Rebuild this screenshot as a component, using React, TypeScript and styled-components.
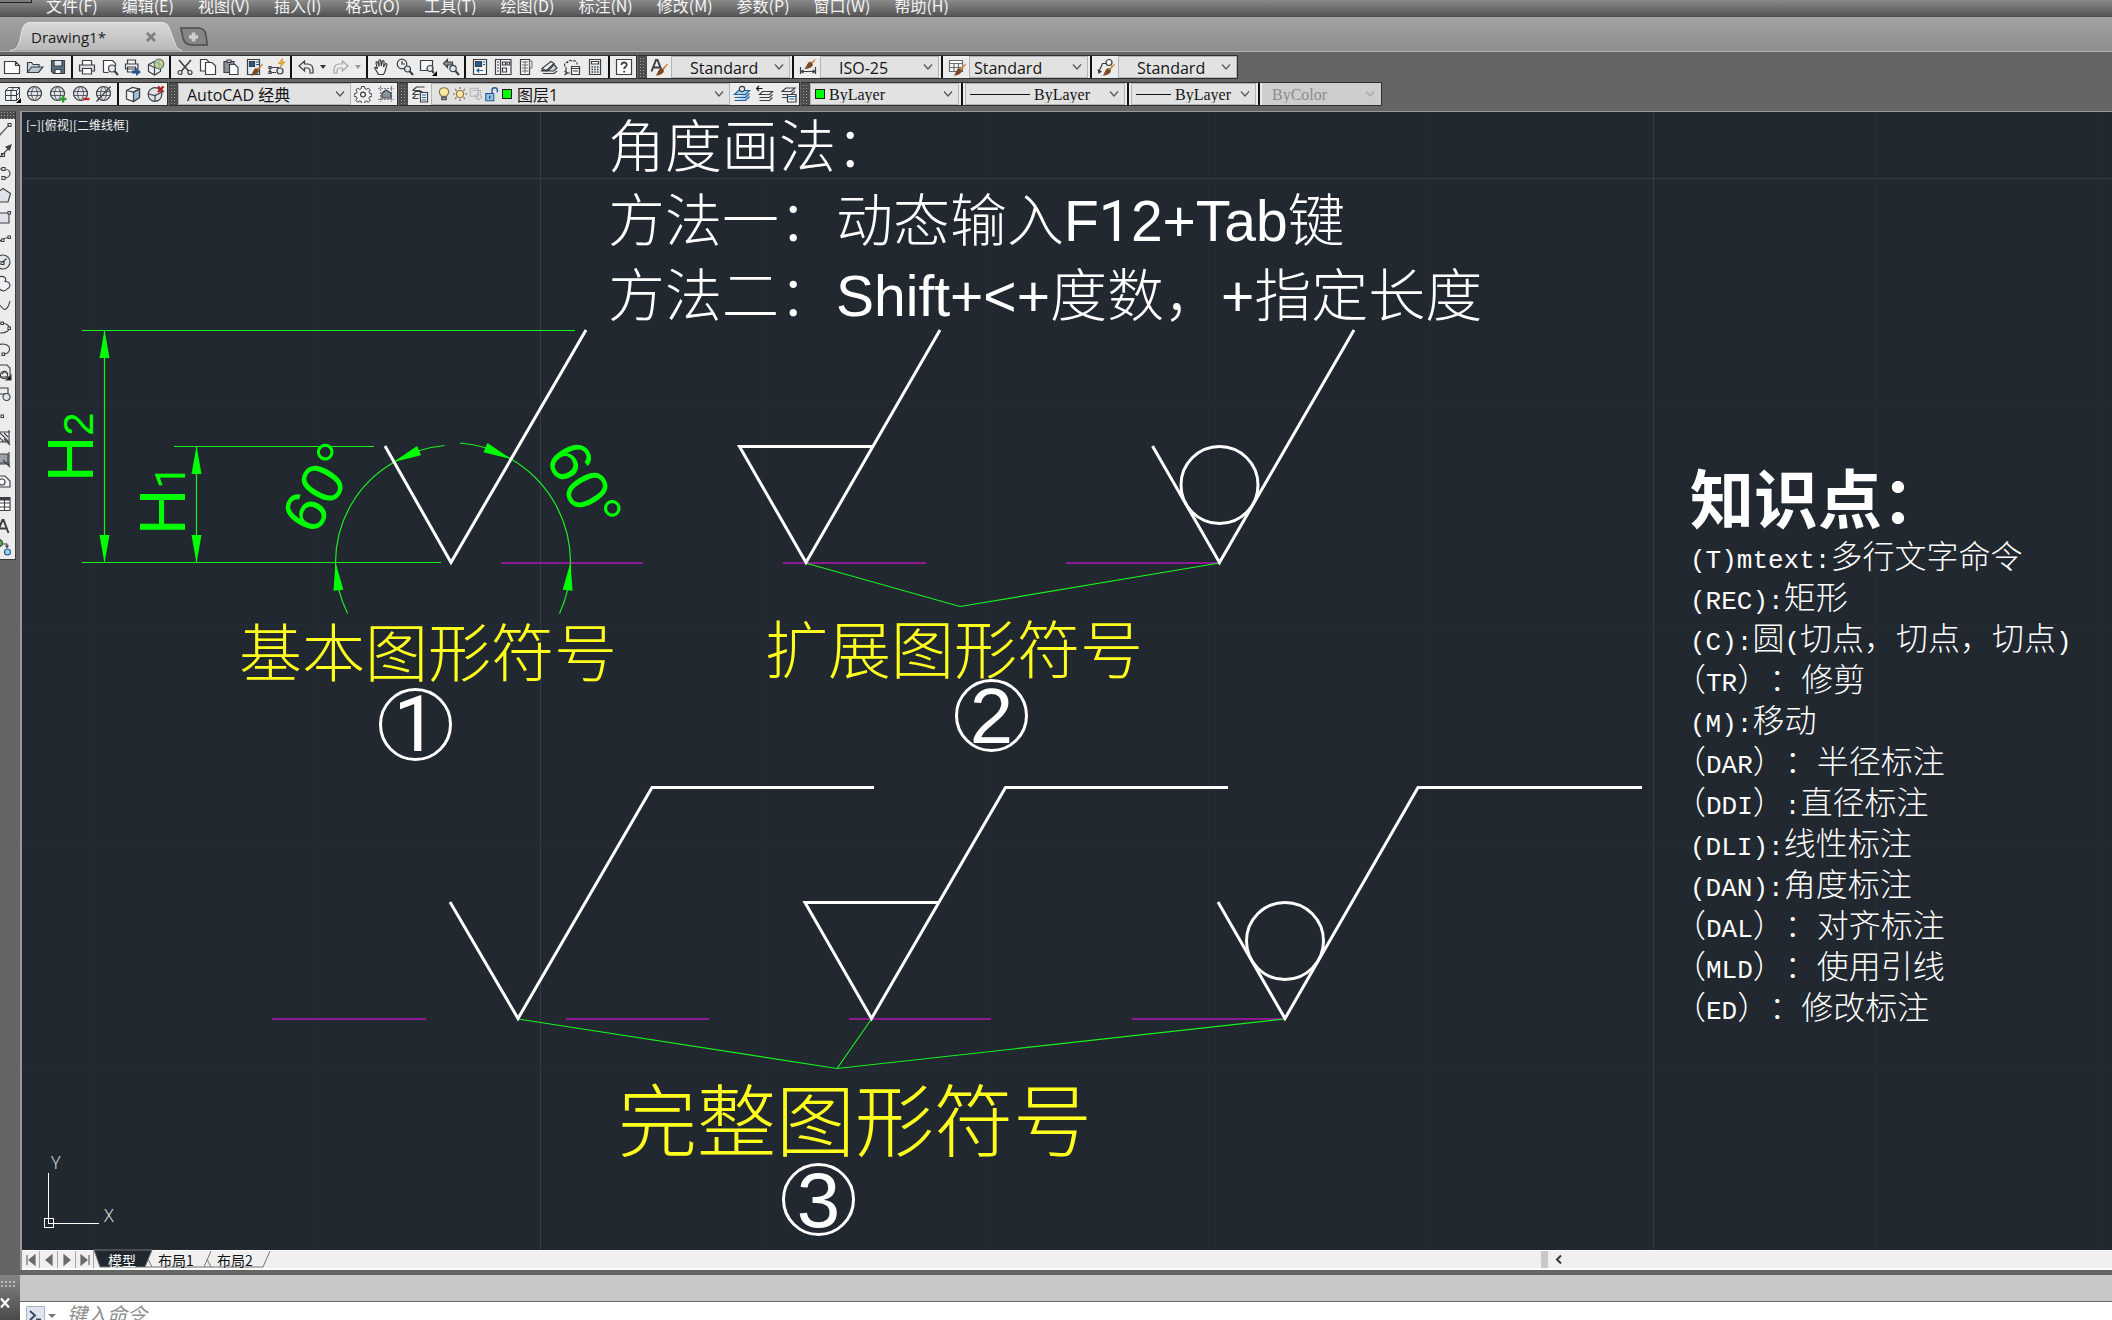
import React from "react";
import styled, { createGlobalStyle, css } from "styled-components";

const UI_FONT = '"Open Sans", "Noto Sans CJK SC", sans-serif';
const CJK_FONT = '"Noto Sans CJK SC", sans-serif';
const MONO_FONT = '"Liberation Mono", "Noto Sans CJK SC", monospace';
const SERIF_FONT = '"Liberation Serif", "Noto Sans CJK SC", serif';
const DRAW_FONT = '"Liberation Sans", "Noto Sans CJK SC", sans-serif';
const DIGIT_FONT = 'Roboto, "Liberation Sans", sans-serif';

const INK = "#3b3f44";
const BLUE = "#1d5c94";
const BROWN = "#7a4a26";
const GREEN = "#00ff00";
const DIM = "#19f01e";

const Global = createGlobalStyle`
  * { box-sizing: border-box; }
  body { margin: 0; background: #656565; font-family: ${UI_FONT}; }
  button, select, input { margin: 0; padding: 0; border: 0; background: none; font: inherit; color: inherit; border-radius: 0; }
`;

/* ---------- application frame ---------- */

const Frame = styled.div`
  display: flex;
  flex-direction: column;
  height: 100vh;
  overflow: hidden;
  background: #656565;
`;

const MenuBar = styled.nav`
  display: flex;
  flex: none;
  align-items: flex-start;
  gap: 24px;
  height: 17px;
  overflow: hidden;
  background: linear-gradient(#8a8a8a, #555555);
  border-bottom: 1px solid #4c4c4c;
`;

const AppButton = styled.button`
  width: 32px;
  height: 3px;
  margin-right: -10px;
  background: #7c7c7c;
  border: solid #222;
  border-width: 0 1px 1px 0;
`;

const MenuItem = styled.button`
  font-family: ${CJK_FONT};
  font-size: 16px;
  line-height: 10px;
  white-space: nowrap;
  color: #f4f4f4;
`;

const FileTabs = styled.div`
  display: flex;
  flex: none;
  align-items: flex-end;
  height: 35px;
  background: linear-gradient(#a2a2a2, #8e8e8e);
  border-bottom: 1px solid #b2b2b2;
`;

const FileTab = styled.div`
  position: relative;
  display: flex;
  align-items: center;
  justify-content: space-between;
  width: 172px;
  height: 29px;
  margin-left: 10px;
  padding: 0 26px 0 21px;
`;

const TabShape = styled.svg`
  position: absolute;
  inset: 0;
  width: 100%;
  height: 100%;
`;

const TabLabel = styled.button`
  position: relative;
  font-size: 15px;
  line-height: 24px;
  color: #1c1c1c;
`;

const TabIconButton = styled.button`
  position: relative;
  display: flex;
`;

const NewTab = styled(TabIconButton)`
  margin: 0 0 5px -2px;
`;

/* ---------- toolbars ---------- */

const ToolRows = styled.div`
  display: flex;
  flex: none;
  flex-direction: column;
  gap: 3px;
  padding: 3px 0 5px;
  background: #656565;
`;

const ToolRow = styled.div`
  display: flex;
  gap: 1px;
`;

const Bar = styled.div`
  display: flex;
  height: 24px;
  background: #ececec;
  border: solid #2f2f2f;
  border-width: 1px 1px 1px 0;
`;

const Grip = styled.span`
  width: 9px;
  background-color: #4c4c4c;
  background-image: radial-gradient(#a0a0a0 30%, transparent 34%);
  background-size: 3px 3px;
  border: 1px solid #4c4c4c;
`;

const IconButton = styled.button<{ $w?: number }>`
  display: flex;
  flex: none;
  align-items: center;
  justify-content: center;
  width: ${(p) => p.$w ?? 23}px;
  height: 100%;
`;

const Divider = styled.span`
  flex: none;
  width: 6px;
  border-left: 2px solid #ececec;
  background: linear-gradient(90deg, #111 2px, #ececec 2px);
`;

const Combo = styled.label<{ $w: number; $off?: boolean }>`
  display: grid;
  flex: none;
  grid-template-columns: auto 1fr 21px;
  align-items: center;
  width: ${(p) => p.$w}px;
  background: ${(p) => (p.$off ? "#cdcdcd" : "#e2e2e2")};
  color: ${(p) => (p.$off ? "#8c8c8c" : "#141414")};
  border: 1px solid ${(p) => (p.$off ? "#cdcdcd" : "#b4b4b4")};
`;

const ComboLead = styled.span`
  display: flex;
  grid-row: 1;
  grid-column: 1;
  align-items: center;
  padding-left: 4px;
  pointer-events: none;
`;

const ComboSelect = styled.select<{ $pad: number; $serif?: boolean }>`
  grid-row: 1;
  grid-column: 1 / -1;
  width: 100%;
  height: 20px;
  padding-left: ${(p) => p.$pad}px;
  appearance: none;
  font-size: 16px;
  opacity: 1;
  ${(p) =>
    p.$serif &&
    css`
      font-family: ${SERIF_FONT};
    `}
`;

const Chevron = styled.svg`
  grid-row: 1;
  grid-column: 3;
  justify-self: center;
  pointer-events: none;
`;

const Swatch = styled.span`
  width: 10px;
  height: 10px;
  background: ${GREEN};
  border: 1px solid #1c1c1c;
`;

const LineSample = styled.span<{ $w: number }>`
  width: ${(p) => p.$w}px;
  height: 1px;
  background: #111;
`;

/* ---------- work area ---------- */

const Work = styled.div`
  display: flex;
  flex: 1;
  min-height: 0;
`;

const SideRail = styled.div`
  flex: none;
  width: 20px;
  background: #656565;
`;

const DrawTools = styled.div`
  display: flex;
  flex-direction: column;
  width: 16px;
  background: #ececec;
  border: solid #3a3a3a;
  border-width: 0 1px 1px 0;
`;

const SideGrip = styled.span`
  height: 8px;
  background-color: #4c4c4c;
  background-image: radial-gradient(#a0a0a0 30%, transparent 34%);
  background-size: 3px 3px;
`;

const SideButton = styled.button`
  display: flex;
  height: 22px;
`;

const Main = styled.div`
  display: flex;
  flex: 1;
  flex-direction: column;
  min-width: 0;
  border: solid #9a9a9a;
  border-width: 1px 0 0 2px;
`;

const Canvas = styled.main`
  position: relative;
  flex: 1;
  overflow: hidden;
  background: #212830;
`;

const Drawing = styled.svg`
  position: absolute;
  inset: 0;
  width: 100%;
  height: 100%;
`;

const ViewControls = styled.div`
  position: relative;
  display: flex;
  padding: 4px;
  font-family: ${CJK_FONT};
  font-size: 12px;
  line-height: 18px;
  color: #f4f4f4;
`;

const Annotation = styled.div<{ $x: number; $y: number; $size: number; $line?: number; $color?: string }>`
  position: absolute;
  left: ${(p) => p.$x}px;
  top: ${(p) => p.$y}px;
  font-family: ${DRAW_FONT};
  font-size: ${(p) => p.$size}px;
  font-weight: 300;
  line-height: ${(p) => p.$line ?? p.$size}px;
  color: ${(p) => p.$color ?? "#ffffff"};
  white-space: nowrap;
`;

const PlainDigit = styled.span`
  font-family: ${DIGIT_FONT};
  font-weight: 400;
`;

const Balloon = styled.div<{ $x: number; $y: number }>`
  position: absolute;
  left: ${(p) => p.$x}px;
  top: ${(p) => p.$y}px;
  display: flex;
  align-items: center;
  justify-content: center;
  width: 73px;
  height: 73px;
  border: 3px solid #fff;
  border-radius: 50%;
  font-family: ${DRAW_FONT};
  font-size: 78px;
  line-height: 78px;
  color: #fff;
`;

const Notes = styled.section`
  position: absolute;
  left: 1668px;
  top: 346px;
  color: #fff;
  white-space: nowrap;
`;

const NotesTitle = styled.h1`
  margin: 0;
  font-family: ${CJK_FONT};
  font-size: 64px;
  font-weight: 700;
  line-height: 74px;
`;

const NotesList = styled.ul`
  margin: 0;
  padding: 2px 0 0;
  list-style: none;
`;

const Note = styled.li`
  font-family: ${CJK_FONT};
  font-size: 32px;
  font-weight: 300;
  line-height: 41px;
  text-spacing-trim: space-all;
`;

const Code = styled.span`
  font-family: ${MONO_FONT};
  font-size: 26px;
  line-height: 20px;
`;

const HalfParen = styled.span`
  font-feature-settings: "halt";
`;

/* ---------- layout tabs and command line ---------- */

const LayoutBar = styled.div`
  display: flex;
  flex: none;
  height: 20px;
  background: #f0f0f0;
  border: solid #fff;
  border-width: 1px 0 2px;
`;

const NavButton = styled.button`
  display: flex;
  align-items: center;
  justify-content: center;
  width: 18px;
  border-right: 1px solid #a8a8a8;
`;

const LayoutTab = styled.button<{ $active?: boolean }>`
  position: relative;
  width: 59px;
  padding-left: ${(p) => (p.$active ? 14 : 5)}px;
  text-align: left;
  font-family: ${CJK_FONT};
  font-size: 14px;
  line-height: 16px;
  color: ${(p) => (p.$active ? "#fff" : "#111")};
`;

const LayoutLabel = styled.span`
  position: relative;
`;

const LayoutTabs = styled.div`
  display: flex;
  flex: 1;
`;

const Splitter = styled.span`
  width: 7px;
  background: #c8c8c8;
`;

const ScrollTrack = styled.div`
  display: flex;
  align-items: center;
  width: 27%;
  padding-left: 7px;
`;

const CommandArea = styled.div`
  display: flex;
  flex: none;
  height: 50px;
  padding-top: 5px;
  background: #656565;
`;

const CommandHandle = styled.div`
  display: flex;
  flex: none;
  flex-direction: column;
  gap: 10px;
  width: 20px;
  padding-top: 5px;
  background: linear-gradient(#858585, #4a4a4a);
`;

const HandleDots = styled.span`
  width: 17px;
  height: 8px;
  background-image: radial-gradient(#b8b8b8 40%, transparent 45%);
  background-size: 4px 4px;
`;

const CommandMain = styled.div`
  display: flex;
  flex: 1;
  flex-direction: column;
`;

const CommandHistory = styled.div`
  height: 27px;
  background: #c8c8c8;
  border-bottom: 1px solid #6c6c6c;
`;

const CommandRow = styled.div`
  display: flex;
  flex: 1;
  align-items: flex-start;
  gap: 3px;
  padding-left: 6px;
  overflow: hidden;
  background: #fff;
`;

const PromptButton = styled.button`
  display: flex;
  gap: 3px;
  padding-top: 4px;
`;

const CommandInput = styled.input`
  flex: 1;
  height: 24px;
  padding-left: 8px;
  outline: none;
  font-family: ${CJK_FONT};
  font-size: 20px;
  font-style: italic;
  line-height: 24px;
  color: #222;
  &::placeholder {
    color: #8e8e8e;
  }
`;

/* ---------- icons ---------- */

const Glyph = ({ children }: { children: React.ReactNode }) => (
  <svg width="18" height="18" viewBox="0 0 18 18" fill="none" stroke={INK} strokeWidth="1.2" aria-hidden="true">
    {children}
  </svg>
);

const Brush = () => (
  <g stroke="none">
    <path d="M17.500 5.500l-6 5.500 1.600 1.400 4.900-6z" fill="#c9843c" />
    <path d="M11 10l3 2.500c-.6 3.500-4 5-8.500 5 2.500-1.200 2-5.800 5.500-7.500z" fill={BROWN} />
  </g>
);
const Globe = () => (
  <>
    <circle cx="8.500" cy="8.500" r="7" fill="#dfe3e7" />
    <path d="M1.800 6.500h13.400M1.800 10.500h13.400M8.500 1.500c-4 4-4 10 0 14M8.500 1.500c4 4 4 10 0 14" strokeWidth=".8" />
  </>
);
const Layers = () => <path d="M3 6.500l4-3.500h9l-4 3.500zM3 9.500h9l4-3.500M3 12.500h9l4-3.500" fill="none" />;

const ICONS: Record<string, React.ReactNode> = {
  new: <path d="M1.500 3.500h11l4 4v8h-15zM12.500 3.500v4h4" fill="#fff" />,
  open: (
    <>
      <path d="M1.500 14.500v-10h4l1.500 2h6v3" fill="#cfd8e3" />
      <path d="M1.500 14.500l4-5.500h11.500l-4.500 5.500z" fill="#b9c6d4" />
    </>
  ),
  save: (
    <>
      <path d="M2.500 2.500h13v13h-11l-2-2z" fill="#5b6f86" />
      <path d="M5 2.500h8v5.500h-8z" fill="#dfe7ee" />
      <path d="M6 11.500h6v4h-6z" fill="#fff" />
    </>
  ),
  print: (
    <>
      <path d="M4.500 7v-4.500h9v4.500" fill="#fff" />
      <path d="M1.500 7h15v6h-15z" fill="#dcdcdc" />
      <path d="M4.500 10.500h9v5.500h-9z" fill="#fff" />
    </>
  ),
  preview: (
    <>
      <path d="M2.500 14.500v-12h9l3 3v3M2.500 14.500h5" fill="#fff" />
      <circle cx="11" cy="10.500" r="3.500" fill="#dfe9f2" />
      <path d="M13.500 13l3.500 4" strokeWidth="2" />
    </>
  ),
  publish: (
    <>
      <path d="M3.500 6v-4h8v4M1.500 6h12.500v5h-12.500zM3.500 9h8v5h-8z" fill="#f4f4f4" />
      <path d="M8 12.500h4v-2.500l5 4-5 4v-2.500h-4z" fill={BLUE} stroke="none" />
    </>
  ),
  web3d: (
    <>
      <path d="M1.500 6.500l6-3 6 3v7l-6 3.500-6-3.500zM1.500 6.500l6 3v7.500M7.500 9.500l3-1.500" fill="#e9eef2" />
      <circle cx="12" cy="6" r="4.800" fill="#c9d488" stroke="#5a7a6a" />
      <path d="M8 4l8 4M12 1.500v9" stroke="#7ca0b8" strokeWidth=".8" />
    </>
  ),
  cut: (
    <>
      <path d="M3 2l9.500 11M15 2l-9.500 11" strokeWidth="1.600" />
      <circle cx="4" cy="14.500" r="2" />
      <circle cx="14" cy="14.500" r="2" />
    </>
  ),
  copy: (
    <>
      <path d="M1.500 1.500h6l3 3v8.500h-9z" fill="#fff" />
      <path d="M6.500 4.500h6.500l3.500 3.500v8.500h-10z" fill="#fff" />
    </>
  ),
  paste: (
    <>
      <path d="M2 3.500h10v11h-10z" fill="#8e9297" />
      <path d="M5 2h4v2.500h-4z" fill="#d0d0d0" />
      <path d="M7.500 6.500h5.500l3 3v7h-8.500z" fill="#fff" />
    </>
  ),
  match: (
    <>
      <path d="M2.500 1.500h12v15h-12z" fill="#e6ebf0" />
      <path d="M4.500 3.500h5v5h-5z" fill={BLUE} />
      <path d="M11 4h3M11 6.500h3" stroke={BLUE} />
      <Brush />
    </>
  ),
  blockEdit: (
    <>
      <path d="M2 9.500h9M2 9.500v5h6" />
      <circle cx="12" cy="13" r="3" fill="#dfe7ee" />
      <path d="M1 8.500h2v2h-2zM1 13.500h2v2h-2z" fill="#fff" />
      <path d="M14.500 0.500l-4 5h3l-1.500 4 5-5.500h-3z" fill="#f4b02c" stroke="#c98210" strokeWidth=".6" />
    </>
  ),
  undo: <path d="M2 8l5.500-5v3h3.500c4 0 5.500 3 5 9h-3c.3-3.500-.5-5-2.500-5h-3v3z" fill="#e8e8e8" />,
  redo: <path d="M16 8l-5.500-5v3h-3.500c-4 0-5.500 3-5 9h3c-.3-3.500.5-5 2.500-5h3v3z" fill="#eee" stroke="#a4a4a4" />,
  hand: (
    <path
      d="M5.500 16.500c-1-2.500-2.500-4-4-6.500 1-1.200 2.200-.3 3 .8l-1.500-6c.2-1.400 1.700-1.200 2 0l1.200 3.700-.4-5.500c.3-1.500 1.900-1.300 2 0l.5 5.200 1-4.700c.5-1.300 2-.8 1.800.5l-.6 5 1.800-3c.8-1 2-.2 1.600.9-1.400 3.500-1.200 6.500-3.400 9.600z"
      fill="#f7f7f7"
    />
  ),
  zoomRt: (
    <>
      <circle cx="6" cy="6" r="4.800" fill="#e7ebee" />
      <path d="M6 3v3h3" />
      <circle cx="11.500" cy="11" r="3" fill="#dfe7ee" />
      <path d="M13.500 13l3.500 4" strokeWidth="2" />
    </>
  ),
  zoomWin: (
    <>
      <path d="M1.500 2.500h12v10h-12z" fill="#f6f6f6" />
      <circle cx="11" cy="10.500" r="3" fill="#dfe7ee" />
      <path d="M13 13l2 2" strokeWidth="2" />
      <path d="M18 13v5h-5z" fill="#000" stroke="none" />
    </>
  ),
  zoomPrev: (
    <>
      <path d="M1.500 5.500l4-4v2.500h5v3h-5v2.500z" fill="#8b939b" />
      <circle cx="11" cy="10.500" r="3.200" fill="#dfe7ee" />
      <path d="M13.500 13l3.500 4" strokeWidth="2" />
    </>
  ),
  props: (
    <>
      <path d="M2.500 1.500h13v15h-13z" fill="#f4f6f8" />
      <path d="M4.500 3.500h6v5h-6z" fill={BLUE} />
      <path d="M12 4h2M12 6.500h2M6 12.500h6M8 10.500l-2 2 2 2" stroke={BLUE} />
    </>
  ),
  design: (
    <>
      <path d="M1.500 1.500h15.500v15h-15.500zM6.500 1.500v15" fill="#f4f6f8" />
      <path d="M3 4h2M3 7h2M3 10h2M3 13h2M8.500 4h3v3h-3zM13 4h2.500v3h-2.500zM8.500 10h4v4h-4z" />
    </>
  ),
  palettes: (
    <>
      <path d="M3.500 1.500h9v15h-9z" fill="#f4f6f8" />
      <path d="M12.500 3h2.500v7h-2.500zM5 4h6M5 7h6M5 10h6M5 13h6M8 3v12" stroke="#6b7176" strokeWidth="1" />
    </>
  ),
  sheets: (
    <>
      <path d="M2 10.500l9-7 3 2-8 7.500z" fill="#f4f4f4" />
      <path d="M1.500 13h12l3.500-3-3-3.500-5 5.500h-7z" fill="#cfd5da" />
      <path d="M3 15.500h11l3-2.500" />
    </>
  ),
  markup: (
    <>
      <path d="M2 8.500c-1.500-3 1-4.500 2.500-4 1-3 4-2.500 5-1 2-1.500 5-.5 4.500 3" strokeDasharray="3 1.300" />
      <path d="M3 9v6h4M1.500 13l3 2-3 2" />
      <path d="M8.500 8.500h8v8h-8z" fill="#f4f6f8" />
      <path d="M8.500 10.500h8M10 13h5" />
    </>
  ),
  calc: (
    <>
      <path d="M3.500 1.500h11v15h-11z" fill="#eceff1" />
      <path d="M5.500 3.500h7v2.500h-7z" fill="#fff" />
      <path d="M5.500 9h7M5.500 11.500h7M5.500 14h7" strokeDasharray="1.600 1.100" strokeWidth="1.500" />
    </>
  ),
  help: (
    <>
      <path d="M1.500 1.500h15v15h-15z" fill="#fff" />
      <path d="M6.500 7c0-3.500 5.500-3.200 5.200 0-.2 1.800-2.500 1.800-2.500 4M9.200 12.800v1.700" strokeWidth="1.900" />
    </>
  ),
  textStyle: (
    <>
      <path d="M1.500 13.500l4.500-11.500h1.500l4.500 11.500M3.500 9.500h6.500" strokeWidth="2" />
      <Brush />
    </>
  ),
  dimStyle: (
    <>
      <path d="M1.500 9v7M16.500 9v7M2 13.500h14M4.500 12l-2.500 1.500 2.500 1.500M13.500 12l2.500 1.500-2.500 1.500" />
      <g stroke="none">
        <path d="M17.500 0.500l-6 4 1.500 2z" fill="#c9843c" />
        <path d="M11 3.500l3 3c-1 3.500-5 4.500-9 4.500 2.500-1 2.500-6 6-7.500z" fill={BROWN} />
      </g>
    </>
  ),
  tableStyle: (
    <>
      <path d="M1.500 2.500h13v11h-13zM1.500 5.500h13M1.500 9.500h13M6 5.500v8M10.500 5.500v8" fill="#fafafa" stroke="#6b6f73" />
      <Brush />
    </>
  ),
  leaderStyle: (
    <>
      <path d="M1.500 14.500l4-9h4" />
      <circle cx="12" cy="4.500" r="3" fill="#f2f2f2" />
      <path d="M0.500 11l1 5 3.500-2.500z" fill={INK} stroke="none" />
      <Brush />
    </>
  ),
  cube: (
    <>
      <path d="M2.500 5.500l3-3h11v10l-3 3h-11zM2.500 5.500h11v10M13.500 5.500l3-3M8 5.500v10M2.500 10.500h11l3-3M8 5.500l3-3" fill="#eef1f4" strokeWidth="1" />
      <path d="M18 13v5h-5z" fill="#000" stroke="none" />
    </>
  ),
  globe: <Globe />,
  globeAdd: (
    <>
      <Globe />
      <path d="M14 10.500v7M10.500 14h7" stroke="#2f9a2f" strokeWidth="2.400" />
    </>
  ),
  globeSub: (
    <>
      <Globe />
      <path d="M11 14h6.500" stroke="#c02626" strokeWidth="2.400" />
    </>
  ),
  globeOff: (
    <>
      <Globe />
      <path d="M1.500 16.500l14-15" />
    </>
  ),
  cubeFace: (
    <>
      <path d="M2.500 5.500l6-3 7 1.500v8.500l-6 4-7-2.500z" fill="#eef1f4" />
      <path d="M9.500 7v9.500l6-4v-8.500z" fill="#9fbcd6" />
      <path d="M2.500 5.500l7 1.500 6-3" />
    </>
  ),
  cubeDel: (
    <>
      <circle cx="8" cy="9.500" r="6.800" fill="#dfe3e7" />
      <path d="M1.500 9l6.500 1.500 6-3M8 10.500v6" />
      <path d="M11 1.500l5.500 5.500M16.500 1.500l-5.500 5.500" stroke="#b31c1c" strokeWidth="2.300" />
    </>
  ),
  gear: (
    <>
      <path d="M7.600 1.500h2.800l.4 2.200 1.600.7 1.900-1.300 1.900 1.900-1.300 1.900.7 1.500 2.200.4v2.600l-2.200.4-.7 1.600 1.300 1.900-1.900 1.900-1.900-1.300-1.600.7-.4 2.200h-2.800l-.4-2.200-1.600-.7-1.900 1.300-1.900-1.900 1.300-1.900-.7-1.600-2.200-.4v-2.600l2.200-.4.7-1.500-1.300-1.900 1.900-1.900 1.900 1.300 1.600-.7z" fill="#f2f2f2" strokeWidth="1" />
      <circle cx="9" cy="9.600" r="2.400" />
    </>
  ),
  workspace: (
    <>
      <path d="M1 3.500h16M1 14.500h16M3.500 1v16M14.500 1v16" stroke="#7d8287" strokeDasharray="2 1" />
      <path d="M5 13v-5l4-3 5 3v5z" fill="#87939e" />
    </>
  ),
  layerProps: (
    <>
      <path d="M1.500 5.500l4-3.500h8M1.500 5.500h8M1.500 9.500l3-3h7M1.500 9.500h7M1.500 13.500l3-3M1.500 13.500h6" />
      <path d="M9.500 7.500h7v9.500h-7z" fill="#f4f6f8" />
      <path d="M11 10h4M11 12.500h4M11 15h4" stroke={BLUE} />
    </>
  ),
  bulb: (
    <>
      <path d="M6 11.500c-4-4-2.500-9.500 3-9.500s7 5.500 3 9.500z" fill="#fbe9a2" stroke="#8a7a4a" />
      <path d="M6.500 12.500h5v3h-5z" fill="#9aa0a6" />
    </>
  ),
  sun: (
    <>
      <circle cx="9" cy="9" r="4" fill="#fbe9a2" stroke="#8a7a4a" />
      <path d="M9 1v2.500M9 14.500v2.500M1 9h2.500M14.500 9h2.500M3.300 3.300l1.800 1.800M12.900 12.900l1.800 1.800M14.700 3.300l-1.800 1.800M5.100 12.900l-1.800 1.800" stroke="#7a6a3a" />
    </>
  ),
  freeze: (
    <>
      <path d="M2.500 2.500h9v9h-9zM5 5h9v3" stroke="#b3b3b3" />
      <circle cx="12" cy="12" r="3" stroke="#b3b3b3" strokeDasharray="2 1" strokeWidth="2" />
    </>
  ),
  lock: (
    <>
      <path d="M2 8.500h9v8h-9z" fill="#8fc0e6" stroke={BLUE} />
      <path d="M9 8v-3.500c0-3.500 6-3.500 6 0v2.500" stroke={BLUE} strokeWidth="1.600" />
      <path d="M6.500 11v3" stroke="#123" />
    </>
  ),
  layerCurrent: (
    <>
      <path d="M1.500 9.500l4-4h11l-4 4zM1.500 12.500h11l4-4M1.500 15.500h11l4-4" fill="#a9d0ee" stroke={BLUE} />
      <circle cx="9" cy="4" r="2.700" fill="#dfeef9" />
    </>
  ),
  layerPrev: (
    <>
      <path d="M3.500 9.500l3-3h10l-3 3zM3.500 12.500h10l3-3M3.500 15.500h10l3-3" fill="#f2f2f2" />
      <path d="M0.500 3.500h6M3 1l-2.500 2.500 2.500 2.500" stroke="#111" />
    </>
  ),
  layerState: (
    <>
      <Layers />
      <path d="M8.500 9.500h8.500v7.500h-8.500z" fill="#f4f6f8" />
      <path d="M8.500 11.500h8.500M10.500 14h5" stroke={BLUE} />
    </>
  ),
};

/* The draw toolbar is docked partly outside the window, so its icons are cut at the left edge. */
const SIDE_ICONS: [string, React.ReactNode][] = [
  ["直线", <path d="M-2 18L9 6M8 4.500h3v3h-3z" />],
  ["构造线", <><path d="M-2 18L10 6M1.500 12.500h3v3h-3z" /><path d="M6 6l5-2-1.500 5z" fill={INK} /></>],
  ["多段线", <><path d="M-2 6h6c8 0 8 9 0 9" /><path d="M2 4.500h3v3h-3zM2 13.500h3v3h-3z" fill="#fff" /></>],
  ["正多边形", <path d="M-5 9L3 3.500L10.500 8.500L8 17h-12z" fill="#dfe2e6" />],
  ["矩形", <><path d="M-4 6h13v10h-13z" fill="#dfe2e6" /><path d="M8 4.500h2.500v2.500h-2.500z" fill="#fff" /></>],
  ["圆弧", <><path d="M-2 15c2-4 6-6 10-6.500" /><path d="M1.500 10h2.500v2.500h-2.500zM8 7h2.500v2.500h-2.500z" fill="#fff" /></>],
  ["圆", <><circle cx="3" cy="11" r="7" fill="#e3e6e9" /><path d="M2.500 11.500l4-4M1 10.500h3v3h-3z" /></>],
  ["修订云线", <path d="M-2 4.500c6-3 9 1 7 4 5 0 7 5 2 7.500-2 3-6 2-7 0" fill="#eef0f2" />],
  ["样条曲线", <path d="M-3 12c4-6 5 5 9 2 3-2 3-5 4-8" />],
  ["椭圆", <><ellipse cx="1" cy="11" rx="8.500" ry="5" /><path d="M1 5h2.500v2.500h-2.500zM8 10h2.500v2.500h-2.500z" fill="#fff" /></>],
  ["椭圆弧", <><path d="M-3 6.500c6-3 13-1 12.500 4-.5 3-3 4.500-6 4.500" /><path d="M2 14h2.500v2.500h-2.500z" fill="#fff" /></>],
  ["插入块", <><path d="M-2 4h9l3 3v9h-12M2 13l3-3 3 3" /><circle cx="4" cy="14" r="3.500" /><path d="M11 14v5h-5z" fill="#000" /></>],
  ["创建块", <><path d="M-2 5h10v6h-10" /><circle cx="6.500" cy="14" r="3.500" fill="#e3e6e9" /></>],
  ["点", <path d="M1 10h2.500v2.500h-2.500z" fill="#fff" />],
  ["图案填充", <path d="M-2 5h12M9 3v14M-2 15h12M0 6l8 8M4 6l4 4M-2 9l6 6M10 18l-6-6" />],
  ["渐变色", <><path d="M-2 5h10v9h-10z" fill="#9da3a9" /><path d="M9 3v14M-2 15h12M10 18l-7-7" /></>],
  ["面域", <><path d="M-2 5h7l5 5v6h-12" fill="#eef0f2" /><circle cx="2" cy="11" r="3" fill="#fff" /></>],
  ["表格", <><path d="M-2 4.500h12v13h-12z" fill="#fff" /><path d="M-2 6h12" strokeWidth="3" /><path d="M-2 10h12M-2 14h12M4.500 6v12" /></>],
  ["多行文字", <path d="M-3 18L2.500 5h1L8.500 18M-1 13.500h8" strokeWidth="2" />],
  ["添加选定对象", <><circle cx="-1" cy="6" r="3.500" fill="#5cb04c" /><circle cx="7.500" cy="15" r="3" fill="#9fd0f2" stroke={BLUE} /><path d="M3 7h4v3M5.500 8.500L7 10.500l1.500-2" /></>],
];

/* ---------- toolbar content ---------- */

type Tool = [string, string];

const Tools = ({ items, width }: { items: Tool[]; width?: number }) => (
  <>
    {items.map(([icon, label]) => (
      <IconButton key={icon} $w={width} title={label} aria-label={label}>
        <Glyph>{ICONS[icon]}</Glyph>
      </IconButton>
    ))}
  </>
);

const MoreButton = ({ label, color }: { label: string; color: string }) => (
  <IconButton $w={12} aria-label={label}>
    <svg width="6" height="4" viewBox="0 0 6 4" aria-hidden="true">
      <path d="M0 0h6L3 4z" fill={color} />
    </svg>
  </IconButton>
);

interface DropProps {
  name: string;
  width: number;
  pad: number;
  value: string;
  serif?: boolean;
  off?: boolean;
  children?: React.ReactNode;
}

const Drop = ({ name, width, pad, value, serif, off, children }: DropProps) => (
  <Combo $w={width} $off={off}>
    <ComboSelect $pad={pad} $serif={serif} aria-label={name} disabled={off}>
      <option>{value}</option>
    </ComboSelect>
    {children && <ComboLead>{children}</ComboLead>}
    <Chevron width="10" height="6" viewBox="0 0 10 6" fill="none" stroke={off ? "#aaa" : "#555"} strokeWidth="1.2" aria-hidden="true">
      <path d="M1 0.500l4 4.500 4-4.500" />
    </Chevron>
  </Combo>
);

const LayerGlyphs = styled.span`
  display: flex;
  align-items: center;
  width: 66px;
  svg {
    width: 16px;
    height: 16px;
  }
`;

/* ---------- drawing ---------- */

const MENUS = ["文件(F)", "编辑(E)", "视图(V)", "插入(I)", "格式(O)", "工具(T)", "绘图(D)", "标注(N)", "修改(M)", "参数(P)", "窗口(W)", "帮助(H)"];

const GRID_X = [94, 317, 540, 762, 985, 1208, 1430, 1653, 1876, 2098];
const GRID_Y = [178, 401, 624, 847, 1070];

const Arrow = ({ x, y, turn }: { x: number; y: number; turn: number }) => (
  <path d="M0 0L-5 28H5z" fill={GREEN} stroke="none" transform={`translate(${x} ${y}) rotate(${turn})`} />
);

const Sheet = () => (
  <Drawing aria-hidden="true">
    <g transform="translate(-22 -112)" fill="none">
      <g strokeWidth="1" shapeRendering="crispEdges">
        {GRID_X.map((x) => (
          <path key={x} d={`M${x}.500 112V3000`} stroke={x === 540 || x === 1653 ? "#333c47" : "#252c35"} />
        ))}
        {GRID_Y.map((y) => (
          <path key={y} d={`M22 ${y}.500H5000`} stroke={y === 178 ? "#333c47" : "#252c35"} />
        ))}
      </g>

      <g stroke="#8d1a92" strokeWidth="2" shapeRendering="crispEdges">
        <path d="M501 563H643M783 563H926M1066 563H1220M272 1019H426M566 1019H709M849 1019H991M1132 1019H1285" />
      </g>

      <g stroke={DIM} strokeWidth="1.200">
        <path d="M82 330.500H575M174 446.500H374M82 562.500H441M104.500 331V562M196.500 447V562" />
        <path d="M335.500 562.500A115.500 115.500 0 0 1 393.500 462.500A116 116 0 0 1 444.500 445.500" />
        <path d="M460 443A119.500 119.500 0 0 1 511 459A119.500 119.500 0 0 1 570.500 562.500" />
        <path d="M335.500 562.500A115.500 115.500 0 0 0 347.600 613.500M570.500 562.500A119.500 119.500 0 0 1 559.500 613.500" />
        <path d="M805.500 563L960 606.500L1219.500 563M518 1019L837 1068.500L1285 1019M871.500 1019L837 1068.500" />
      </g>
      <Arrow x={104.5} y={330} turn={0} />
      <Arrow x={104.5} y={563} turn={180} />
      <Arrow x={196.5} y={446} turn={0} />
      <Arrow x={196.5} y={563} turn={180} />
      <Arrow x={335.5} y={562.5} turn={-6} />
      <Arrow x={570.5} y={562.5} turn={6} />
      <Arrow x={393.5} y={462} turn={-114} />
      <Arrow x={511} y={459} turn={114} />

      <g fill={GREEN} fontFamily={DRAW_FONT}>
        <text transform="translate(93 482) rotate(-90)" fontSize="64">
          H<tspan fontSize="42">2</tspan>
        </text>
        <text transform="translate(185 535) rotate(-90)" fontSize="64">
          H<tspan fontSize="42" fontFamily={DIGIT_FONT}>1</tspan>
        </text>
        <text transform="translate(315 537) rotate(-60)" fontSize="60">60°</text>
        <text transform="translate(544 457) rotate(60)" fontSize="60">60°</text>
      </g>

      <g stroke="#fff" strokeWidth="3">
        <path d="M385 446L451 562.500L586 330" />
        <path d="M873 446.500H739.500L806 562.500L940 330" />
        <path d="M1152.500 446L1219.500 562.500L1354 330" />
        <circle cx="1219.500" cy="485" r="38.500" />
        <path d="M450 902L518 1018.500L652 787.500H874" />
        <path d="M938 902.500H805L871.500 1018.500L1005.500 787.500H1228" />
        <path d="M1218 902L1285 1018.500L1418 787.500H1642" />
        <circle cx="1285" cy="941" r="38.500" />
      </g>

      <g stroke="#fff" strokeWidth="1" shapeRendering="crispEdges">
        <path d="M48.500 1173V1223.500H99M44.500 1218.500h9v9h-9z" />
      </g>
      <g fill="#e8e8e8" fontFamily={UI_FONT} fontSize="18" fontWeight="300">
        <text x="51" y="1169">Y</text>
        <text x="104" y="1222">X</text>
      </g>
    </g>
  </Drawing>
);

const LayoutShape = styled.svg`
  position: absolute;
  top: 0;
  left: 0;
  width: 66px;
  height: 17px;
  overflow: visible;
`;

const NAV: [string, string][] = [
  ["第一个布局", "M2 1v10M10 1v10L4 6z"],
  ["上一个布局", "M9 1v10L3 6z"],
  ["下一个布局", "M3 1v10l6-5z"],
  ["最后一个布局", "M10 1v10M2 1v10l6-5z"],
];

export default function App() {
  return (
    <Frame>
      <Global />
      <MenuBar>
        <AppButton aria-label="应用程序" />
        {MENUS.map((m) => (
          <MenuItem key={m}>{m}</MenuItem>
        ))}
      </MenuBar>

      <FileTabs>
        <FileTab>
          <TabShape viewBox="0 0 172 29" preserveAspectRatio="none" aria-hidden="true">
            <defs>
              <linearGradient id="tab" x1="0" y1="0" x2="0" y2="1">
                <stop offset="0" stopColor="#d9d9d9" />
                <stop offset="1" stopColor="#b8b8b8" />
              </linearGradient>
            </defs>
            <path d="M0 28.500C6 28 8 25 10 18L12 8C14 2 16 .500 21 .500H150C156 .500 158 2 160 8L164 19C166 25 168 28 172 28.500" fill="url(#tab)" stroke="#e6e6e6" />
          </TabShape>
          <TabLabel>Drawing1*</TabLabel>
          <TabIconButton aria-label="关闭">
            <svg width="10" height="10" viewBox="0 0 10 10" stroke="#7d7d7d" strokeWidth="2.600" aria-hidden="true">
              <path d="M1 1l8 8M9 1L1 9" />
            </svg>
          </TabIconButton>
        </FileTab>
        <NewTab aria-label="新图形">
          <svg width="28" height="19" viewBox="0 0 28 19" aria-hidden="true">
            <path d="M.800 1H18C23 1 25 3 26 8L27.200 18H12C6 18 4 15 3 11z" fill="#858585" stroke="#4c4c4c" strokeWidth="1.500" />
            <path d="M13.500 5.500v9M9 10h9" stroke="#cfcfcf" strokeWidth="3.600" />
          </svg>
        </NewTab>
      </FileTabs>

      <ToolRows>
        <ToolRow>
          <Bar>
            <Tools items={[["new", "新建"], ["open", "打开"], ["save", "保存"]]} />
            <Divider />
            <Tools items={[["print", "打印"], ["preview", "打印预览"], ["publish", "发布"], ["web3d", "三维DWF"]]} />
            <Divider />
            <Tools items={[["cut", "剪切"], ["copy", "复制"], ["paste", "粘贴"], ["match", "特性匹配"], ["blockEdit", "块编辑器"]]} />
            <Divider />
            <Tools items={[["undo", "放弃"]]} />
            <MoreButton label="放弃列表" color="#333" />
            <Tools items={[["redo", "重做"]]} />
            <MoreButton label="重做列表" color="#999" />
            <Divider />
            <Tools items={[["hand", "实时平移"], ["zoomRt", "实时缩放"], ["zoomWin", "窗口缩放"], ["zoomPrev", "缩放上一个"]]} />
            <Divider />
            <Tools items={[["props", "特性"], ["design", "设计中心"], ["palettes", "工具选项板"], ["sheets", "图纸集"], ["markup", "标记集"], ["calc", "计算器"]]} />
            <Divider />
            <Tools width={24} items={[["help", "帮助"]]} />
          </Bar>
          <Bar>
            <Grip />
            <Tools width={24} items={[["textStyle", "文字样式"]]} />
            <Drop name="文字样式" width={119} pad={18} value="Standard" />
            <Divider />
            <Tools width={24} items={[["dimStyle", "标注样式"]]} />
            <Drop name="标注样式" width={119} pad={18} value="ISO-25" />
            <Divider />
            <Tools width={24} items={[["tableStyle", "表格样式"]]} />
            <Drop name="表格样式" width={119} pad={4} value="Standard" />
            <Divider />
            <Tools width={24} items={[["leaderStyle", "多重引线样式"]]} />
            <Drop name="多重引线样式" width={119} pad={18} value="Standard" />
          </Bar>
        </ToolRow>

        <ToolRow>
          <Bar>
            <Tools items={[["cube", "视图"], ["globe", "动态观察"], ["globeAdd", "添加"], ["globeSub", "删除"], ["globeOff", "关闭"]]} />
            <Divider />
            <Tools items={[["cubeFace", "面"], ["cubeDel", "清除"]]} />
          </Bar>
          <Bar>
            <Grip />
            <Drop name="工作空间" width={173} pad={8} value="AutoCAD 经典" />
            <Tools items={[["gear", "工作空间设置"], ["workspace", "我的工作空间"]]} />
          </Bar>
          <Bar>
            <Grip />
            <Tools items={[["layerProps", "图层特性"]]} />
            <Drop name="图层" width={299} pad={85} value="图层1">
              <LayerGlyphs>
                <Glyph>{ICONS.bulb}</Glyph>
                <Glyph>{ICONS.sun}</Glyph>
                <Glyph>{ICONS.freeze}</Glyph>
                <Glyph>{ICONS.lock}</Glyph>
              </LayerGlyphs>
              <Swatch />
            </Drop>
            <Tools items={[["layerCurrent", "置为当前"], ["layerPrev", "上一个图层"], ["layerState", "图层状态"]]} />
          </Bar>
          <Bar>
            <Grip />
            <Drop name="颜色" width={149} pad={18} value="ByLayer" serif>
              <Swatch />
            </Drop>
            <Divider />
            <Drop name="线型" width={160} pad={68} value="ByLayer" serif>
              <LineSample $w={60} />
            </Drop>
            <Divider />
            <Drop name="线宽" width={125} pad={43} value="ByLayer" serif>
              <LineSample $w={35} />
            </Drop>
            <Divider />
            <Drop name="打印样式" width={119} pad={9} value="ByColor" serif off />
          </Bar>
        </ToolRow>
      </ToolRows>

      <Work>
        <SideRail>
          <DrawTools>
            <SideGrip />
            {SIDE_ICONS.map(([label, art]) => (
              <SideButton key={label} title={label} aria-label={label}>
                <svg width="14" height="22" viewBox="0 0 14 22" fill="none" stroke={INK} strokeWidth="1.100" aria-hidden="true">
                  {art}
                </svg>
              </SideButton>
            ))}
          </DrawTools>
        </SideRail>

        <Main>
          <Canvas>
            <Sheet />
            <ViewControls>
              <button>[−]</button>
              <button>[俯视]</button>
              <button>[二维线框]</button>
            </ViewControls>

            <Annotation $x={586} $y={-2} $size={57} $line={74}>
              <div>角度画法：</div>
              <div>方法一：动态输入F<PlainDigit>1</PlainDigit>2+Tab键</div>
              <div>方法二：Shift+&lt;+度数，+指定长度</div>
            </Annotation>

            <Annotation $x={217} $y={511} $size={63} $color="#ffff1e">基本图形符号</Annotation>
            <Annotation $x={743} $y={508} $size={63} $color="#ffff1e">扩展图形符号</Annotation>
            <Annotation $x={596} $y={972} $size={79} $color="#ffff1e">完整图形符号</Annotation>

            <Balloon $x={357} $y={576}><PlainDigit>1</PlainDigit></Balloon>
            <Balloon $x={933} $y={567}>2</Balloon>
            <Balloon $x={760} $y={1051}>3</Balloon>

            <Notes>
              <NotesTitle>知识点：</NotesTitle>
              <NotesList>
                <Note><Code>(T)mtext:</Code>多行文字命令</Note>
                <Note><Code>(REC):</Code>矩形</Note>
                <Note><Code>(C):</Code>圆<Code>(</Code>切点，切点，切点<Code>)</Code></Note>
                <Note><HalfParen>（</HalfParen><Code>TR</Code>）：修剪</Note>
                <Note><Code>(M):</Code>移动</Note>
                <Note><HalfParen>（</HalfParen><Code>DAR</Code>）：半径标注</Note>
                <Note><HalfParen>（</HalfParen><Code>DDI</Code>）<Code>:</Code>直径标注</Note>
                <Note><Code>(DLI):</Code>线性标注</Note>
                <Note><Code>(DAN):</Code>角度标注</Note>
                <Note><HalfParen>（</HalfParen><Code>DAL</Code>）：对齐标注</Note>
                <Note><HalfParen>（</HalfParen><Code>MLD</Code>）：使用引线</Note>
                <Note><HalfParen>（</HalfParen><Code>ED</Code>）：修改标注</Note>
              </NotesList>
            </Notes>
          </Canvas>

          <LayoutBar>
            {NAV.map(([label, d]) => (
              <NavButton key={label} aria-label={label}>
                <svg width="12" height="12" viewBox="0 0 12 12" fill="#6a6a6a" stroke="#6a6a6a" strokeWidth="1.200" aria-hidden="true">
                  <path d={d} />
                </svg>
              </NavButton>
            ))}
            <LayoutTabs>
              <LayoutTab $active>
                <LayoutShape aria-hidden="true">
                  <path d="M0 -1H58L51 16H6z" fill="#212830" stroke="#777" />
                </LayoutShape>
                <LayoutLabel>模型</LayoutLabel>
              </LayoutTab>
              <LayoutTab>
                <LayoutShape aria-hidden="true">
                  <path d="M-8 16H51L58 0M-5 8L-1 16" fill="none" stroke="#777" />
                </LayoutShape>
                <LayoutLabel>布局1</LayoutLabel>
              </LayoutTab>
              <LayoutTab>
                <LayoutShape aria-hidden="true">
                  <path d="M-8 16H51L58 0M-5 8L-1 16" fill="none" stroke="#777" />
                </LayoutShape>
                <LayoutLabel>布局2</LayoutLabel>
              </LayoutTab>
            </LayoutTabs>
            <Splitter />
            <ScrollTrack>
              <TabIconButton aria-label="向左滚动">
                <svg width="8" height="9" viewBox="0 0 8 9" fill="none" stroke="#333" strokeWidth="2" aria-hidden="true">
                  <path d="M6 .500L2 4.500l4 4" />
                </svg>
              </TabIconButton>
            </ScrollTrack>
          </LayoutBar>
        </Main>
      </Work>

      <CommandArea>
        <CommandHandle>
          <HandleDots />
          <TabIconButton aria-label="关闭命令行">
            <svg width="12" height="10" viewBox="0 0 12 10" stroke="#fff" strokeWidth="2.200" aria-hidden="true">
              <path d="M1 .500l8 9M9 .500l-8 9" />
            </svg>
          </TabIconButton>
        </CommandHandle>
        <CommandMain>
          <CommandHistory />
          <CommandRow>
            <PromptButton aria-label="最近使用的命令">
              <svg width="19" height="19" viewBox="0 0 19 19" aria-hidden="true">
                <path d="M.500 .500h18v18h-18z" fill="#dfe4ee" stroke="#a8b2c6" />
                <path d="M4 5l5 4.500L4 14M10 13.500h5" fill="none" stroke="#3d4a63" strokeWidth="2" />
              </svg>
              <svg width="8" height="19" viewBox="0 0 8 19" aria-hidden="true">
                <path d="M0 8h8l-4 4z" fill="#777" />
              </svg>
            </PromptButton>
            <CommandInput aria-label="命令" placeholder="键入命令" />
          </CommandRow>
        </CommandMain>
      </CommandArea>
    </Frame>
  );
}
